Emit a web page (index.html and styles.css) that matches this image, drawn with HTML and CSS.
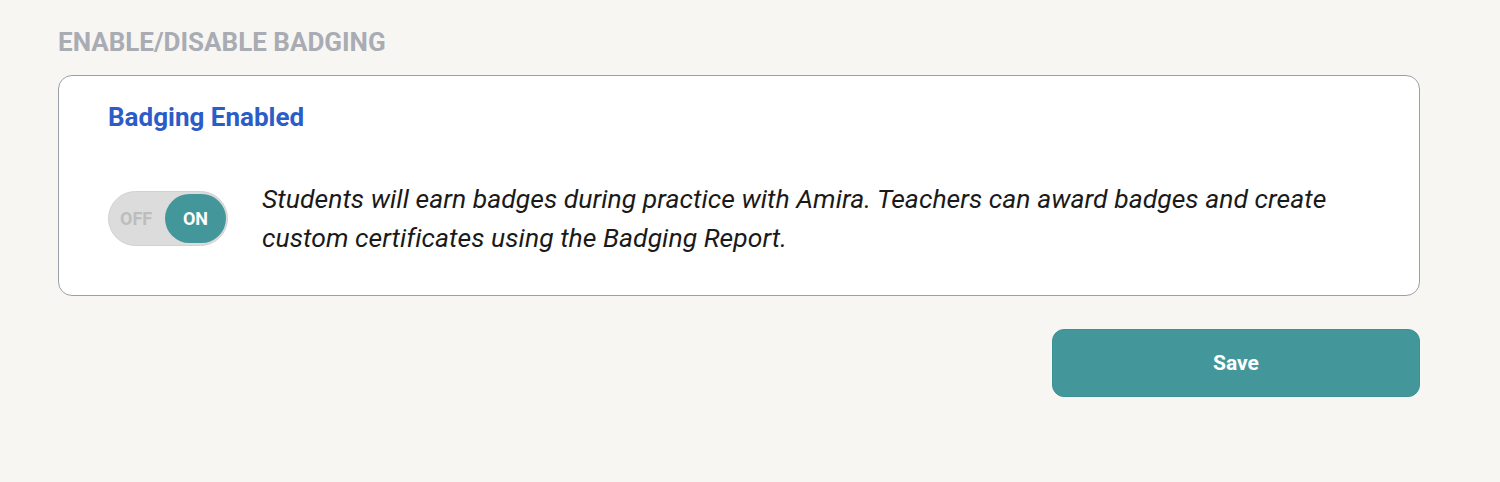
FILE: index.html
```html
<!DOCTYPE html>
<html lang="en">
<head>
<meta charset="utf-8">
<title>Badging</title>
<link rel="stylesheet" href="styles.css">
</head>
<body>
<main class="page">
  <h2 class="section-title">ENABLE/DISABLE BADGING</h2>
  <section class="card">
    <h3 class="card-title">Badging Enabled</h3>
    <div class="row">
      <div class="toggle" role="switch" aria-checked="true">
        <span class="toggle-off">OFF</span>
        <span class="toggle-on">ON</span>
      </div>
      <p class="desc">Students will earn badges during practice with Amira. Teachers can award badges and create custom certificates using the Badging Report.</p>
    </div>
  </section>
  <div class="actions">
    <button class="save-btn" type="button">Save</button>
  </div>
</main>
</body>
</html>
```
FILE: styles.css
```css
* { box-sizing: border-box; }
html, body { margin: 0; padding: 0; }
body {
  background: #f7f6f3;
  font-family: Roboto, "Liberation Sans", Arial, sans-serif;
  width: 1500px;
  height: 482px;
  overflow: hidden;
}
.page {
  padding: 27px 80px 0 58px;
}
.section-title {
  margin: 0;
  font-size: 26px;
  font-weight: 700;
  color: #a9acb3;
  line-height: 30px;
}
.card {
  margin-top: 18px;
  background: #fff;
  border: 1px solid #9b9fa7;
  border-radius: 14px;
  height: 221px;
  padding: 26px 80px 0 49px;
}
.card-title {
  margin: 0;
  font-size: 26px;
  font-weight: 700;
  color: #2b5cc8;
  line-height: 30px;
}
.row {
  display: flex;
  align-items: center;
  margin-top: 47px;
  gap: 34px;
}
.toggle {
  flex: none;
  width: 120px;
  height: 55px;
  border-radius: 28px;
  background: #dcdcdc;
  border: 1px solid #d2d2d2;
  display: flex;
  align-items: center;
  padding: 2px 1px 2px 11px;
}
.toggle-off {
  font-size: 18px;
  font-weight: 700;
  color: #bdbdbd;
  width: 45px;
}
.toggle-on {
  width: 61px;
  height: 49px;
  border-radius: 25px;
  background: #43979a;
  color: #fff;
  font-size: 18px;
  font-weight: 700;
  display: flex;
  align-items: center;
  justify-content: center;
}
.desc {
  margin: 0;
  font-size: 26.5px;
  letter-spacing: 0.04px;
  font-style: italic;
  color: #1a1a1a;
  line-height: 39px;
}
.actions {
  display: flex;
  justify-content: flex-end;
  margin-top: 33px;
}
.save-btn {
  width: 368px;
  height: 68px;
  border: 1px solid #3a9294;
  border-radius: 12px;
  background: #43979a;
  color: #fff;
  font-family: Roboto, "Liberation Sans", Arial, sans-serif;
  font-size: 21px;
  font-weight: 700;
  cursor: pointer;
}
```
